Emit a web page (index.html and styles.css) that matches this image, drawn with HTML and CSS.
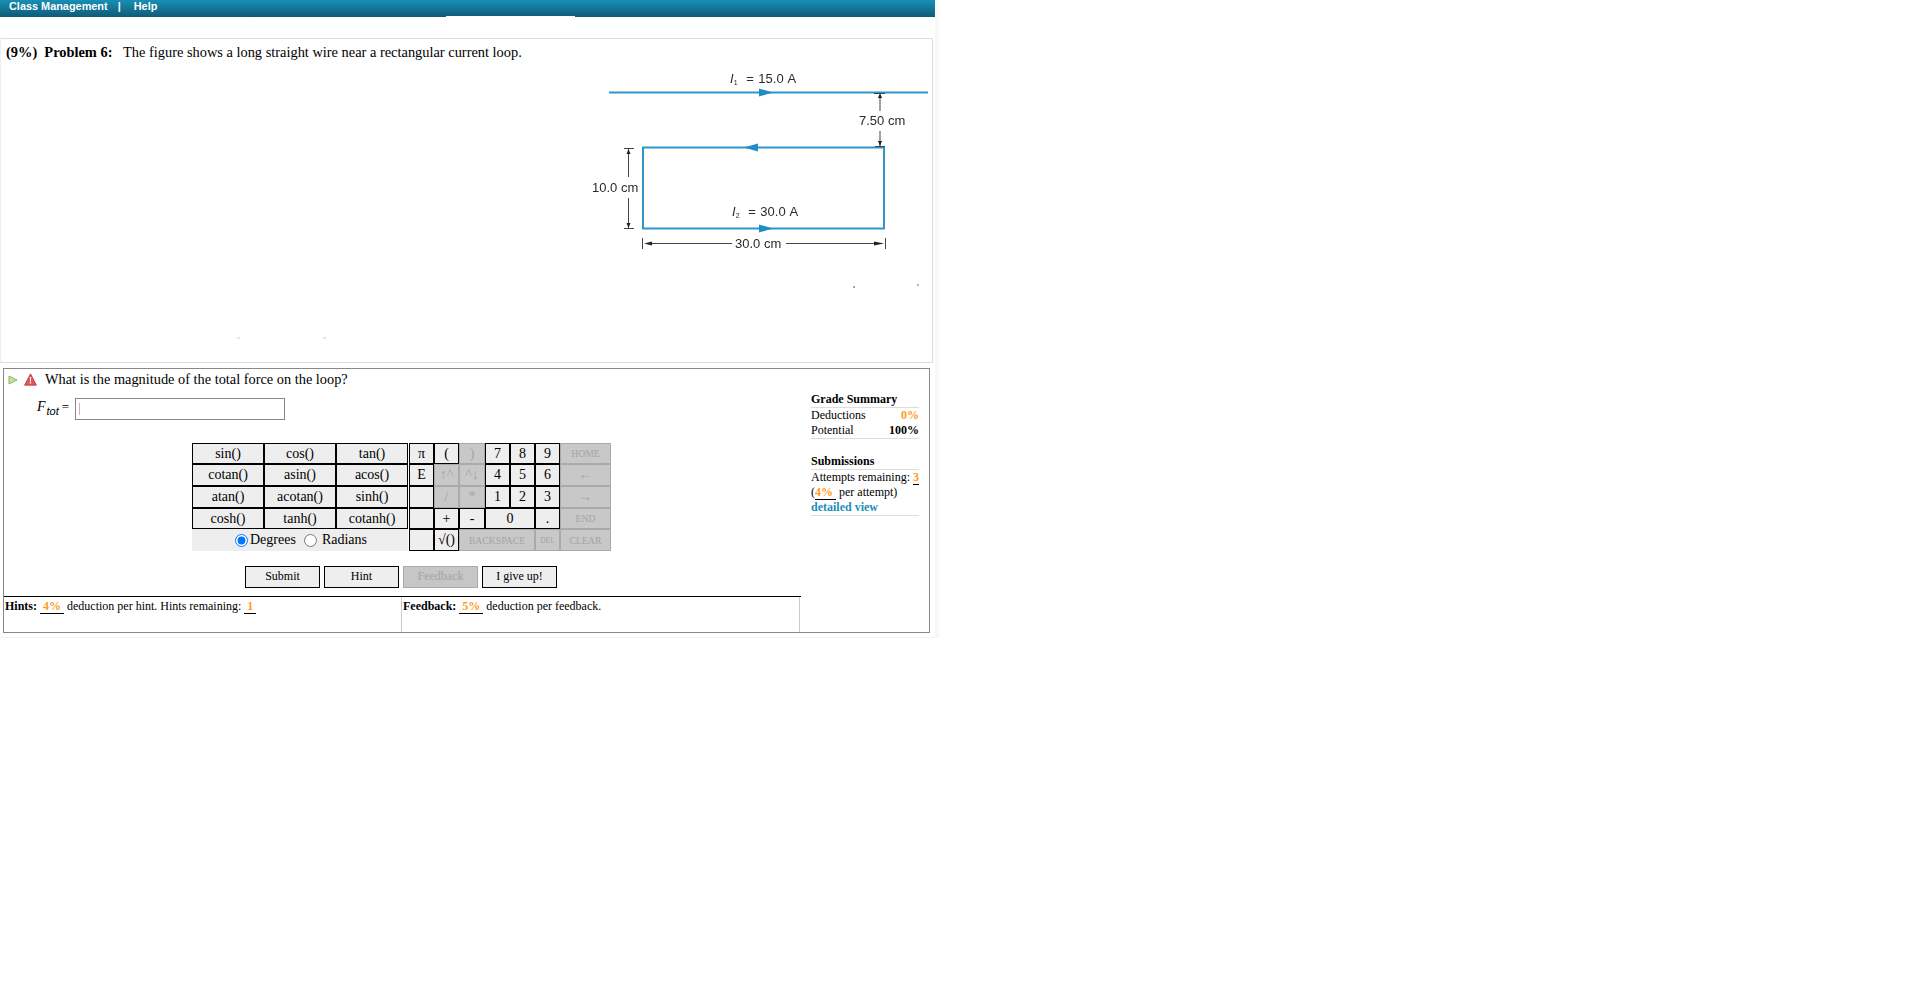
FILE: index.html
```html
<!DOCTYPE html>
<html lang="en">
<head>
<meta charset="utf-8">
<title>Problem 6</title>
<link rel="stylesheet" href="styles.css">
</head>
<body>
<div class="page">
  <header class="topbar">
    <nav class="topnav"><a>Class Management</a><span class="sep">|</span><a>Help</a></nav>
    <div class="notch"></div>
  </header>
  <section class="problem">
    <p class="statement"><b>(9%)&nbsp; Problem 6:</b>&nbsp;&nbsp; The figure shows a long straight wire near a rectangular current loop.</p>
    <svg class="figure" width="934" height="292" viewBox="0 33 934 292" aria-label="figure">
      <g class="wire">
        <path d="M609 54.5H928"/>
        <path d="M643 109.5H884V190.5H643Z"/>
      </g>
      <g class="head">
        <path d="M759 50.5L773 54.5L759 58.5Z"/>
        <path d="M758 105.5L744 109.5L758 113.5Z"/>
        <path d="M759 186.5L773 190.5L759 194.5Z"/>
      </g>
      <g class="dim">
        <path d="M874 55.5H885M880 57V73M880 93V108M875 108.5H885"/>
        <path d="M624 110.5H634M628.5 111V139M628.5 160V190M624 190.5H634"/>
        <path d="M642.5 200V211M885.5 200V211M646 205.5H732M786 205.5H882"/>
      </g>
      <g class="tips">
        <path d="M880 55L878 60H882Z"/>
        <path d="M880 108L878 103H882Z"/>
        <path d="M628.5 111L626.5 116H630.5Z"/>
        <path d="M628.5 190L626.5 185H630.5Z"/>
        <path d="M644 205.5L652 203.5V207.5Z"/>
        <path d="M884 205.5L874 203.5V207.5Z"/>
      </g>
      <g class="labels">
        <text class="current" x="730" y="45"><tspan class="it">I</tspan><tspan class="sub" dy="2">1</tspan><tspan dy="-2" dx="4"> = 15.0 A</tspan></text>
        <text x="859" y="87">7.50 cm</text>
        <text x="592" y="154">10.0 cm</text>
        <text class="current" x="732" y="178"><tspan class="it">I</tspan><tspan class="sub" dy="2">2</tspan><tspan dy="-2" dx="4"> = 30.0 A</tspan></text>
        <text x="735" y="210">30.0 cm</text>
      </g>
      <circle class="speck" cx="854" cy="249" r=".8"/>
      <circle class="speck" cx="918" cy="247" r=".7"/>
      <path class="faint" d="M237 300h3M323 300h3"/>
    </svg>
  </section>
  <section class="question">
    <div class="qmain">
      <div class="qline">
        <svg class="play" width="10" height="10" viewBox="0 0 10 10"><path d="M1 1L9 5L1 9Z"/></svg>
        <svg class="warn" width="13" height="13" viewBox="0 0 12 12"><path class="warnbg" d="M6 .8L11.4 11.2H.6Z"/><path class="warnmark" d="M5.4 3.8H6.6L6.4 7.8H5.6ZM5.4 8.6H6.6V9.8H5.4Z"/></svg>
        <span>What is the magnitude of the total force on the loop?</span>
      </div>
      <div class="answer">
        <span class="var">F<sub>tot</sub></span><span class="eq">=</span>
        <div class="field"><i class="caret"></i></div>
      </div>
      <div class="calc">
        <div class="fns">
          <div class="key">sin()</div><div class="key">cos()</div><div class="key">tan()</div>
          <div class="key">cotan()</div><div class="key">asin()</div><div class="key">acos()</div>
          <div class="key">atan()</div><div class="key">acotan()</div><div class="key">sinh()</div>
          <div class="key">cosh()</div><div class="key">tanh()</div><div class="key">cotanh()</div>
          <div class="units">
            <input class="radio" type="radio" name="unit" checked><span class="rlabel">Degrees</span>
            <input class="radio second" type="radio" name="unit"><span class="rlabel">Radians</span>
          </div>
        </div>
        <div class="pad">
          <div class="key">π</div><div class="key">(</div><div class="key off">)</div><div class="key">7</div><div class="key">8</div><div class="key">9</div><div class="key off sm">HOME</div>
          <div class="key">E</div><div class="key off">↑^</div><div class="key off">^↓</div><div class="key">4</div><div class="key">5</div><div class="key">6</div><div class="key off">←</div>
          <div class="key"></div><div class="key off">/</div><div class="key off">*</div><div class="key">1</div><div class="key">2</div><div class="key">3</div><div class="key off">→</div>
          <div class="key"></div><div class="key">+</div><div class="key">-</div><div class="key span2">0</div><div class="key">.</div><div class="key off sm">END</div>
          <div class="key"></div><div class="key">√()</div><div class="key off sm span3">BACKSPACE</div><div class="key off xs">DEL</div><div class="key off sm">CLEAR</div>
        </div>
      </div>
      <div class="actions">
        <button class="btn">Submit</button>
        <button class="btn">Hint</button>
        <button class="btn disabled">Feedback</button>
        <button class="btn">I give up!</button>
      </div>
      <div class="notes">
        <div class="note"><b>Hints:</b> <b class="pct">&nbsp;4%&nbsp;</b> deduction per hint. Hints remaining: <b class="pct">&nbsp;1&nbsp;</b></div>
        <div class="note"><b>Feedback:</b> <b class="pct">&nbsp;5%&nbsp;</b> deduction per feedback.</div>
      </div>
    </div>
    <aside class="summary">
      <h4 class="sumhead">Grade Summary</h4>
      <div class="sumbody">
        <div class="sumrow"><span>Deductions</span><b class="orange">0%</b></div>
        <div class="sumrow"><span>Potential</span><b>100%</b></div>
      </div>
      <h4 class="sumhead gap">Submissions</h4>
      <div class="sumbody">
        <div>Attempts remaining: <b class="pct">3</b></div>
        <div>(<b class="pct">4%&nbsp;</b> per attempt)</div>
        <div><b class="link">detailed view</b></div>
      </div>
    </aside>
  </section>
</div>
</body>
</html>
```
FILE: styles.css
```css
html, body { margin: 0; padding: 0; background: #fff; }
body { font-family: "Liberation Serif", "Times New Roman", serif; color: #000; }

.page {
  width: 935px;
  height: 637px;
  background: #fff;
  border-right: 4px solid #f8f8f8;
  border-bottom: 1px solid #f4f4f4;
  overflow: hidden;
}

.topbar {
  position: relative;
  height: 17px;
  background: linear-gradient(#1790b5, #0f5a77);
  overflow: hidden;
}
.topnav {
  display: flex;
  align-items: center;
  height: 13px;
  padding-left: 9px;
  font: bold 10.9px/13px "Liberation Sans", Arial, sans-serif;
  color: #fff;
}
.sep { margin: 0 13px 0 10px; }
.notch {
  position: absolute;
  left: 446px;
  bottom: 0;
  width: 129px;
  height: 1px;
  background: #fff;
}

.problem {
  height: 325px;
  margin-top: 21px;
  border: 1px solid #ddd;
  border-left: 1px solid #eee;
  width: 933px;
  box-sizing: border-box;
  overflow: hidden;
}
.statement {
  margin: 0;
  padding: 4px 0 0 5px;
  height: 32px;
  box-sizing: border-box;
  font-size: 14.4px;
  line-height: 18px;
}
.figure { display: block; margin-left: -1px; filter: blur(.3px); }
.wire path { fill: none; stroke: #2f96c9; stroke-width: 2; }
.head path { fill: #1f8dc6; }
.dim path { fill: none; stroke: #444; stroke-width: 1; }
.tips path { fill: #222; }
.labels text { font: 13px "Liberation Sans", Arial, sans-serif; fill: #2a2a2a; }
.labels .current { word-spacing: 1px; }
.labels .it { font-style: italic; }
.labels .sub { font-size: 7px; }
.speck { fill: #333; }
.faint { fill: none; stroke: #ccc; stroke-width: 1; }

.question {
  display: grid;
  grid-template-columns: 797px 1fr;
  box-sizing: border-box;
  width: 927px;
  height: 265px;
  margin: 5px 0 0 3px;
  border: 1px solid #888;
}
.qmain { display: flex; flex-direction: column; }
.qline {
  display: flex;
  align-items: center;
  height: 21px;
  font-size: 14.35px;
}
.play { margin-left: 4px; }
.play path { fill: #c7dfa0; stroke: #8db56b; stroke-width: 1; }
.warn { margin-left: 6px; margin-right: 8px; }
.warnbg { fill: #e2595c; stroke: #b03a3c; stroke-width: .8; }
.warnmark { fill: #fff; }

.answer {
  display: flex;
  align-items: flex-start;
  height: 22px;
  margin-top: 8px;
  padding-left: 33px;
}
.var { font-size: 14px; font-style: italic; line-height: 18px; }
.var sub { font: italic 11px "Liberation Sans", Arial, sans-serif; vertical-align: -4px; line-height: 0; margin-left: 1px; }
.eq { font-size: 13px; line-height: 18px; margin: 0 2px 0 3px; }
.field {
  width: 210px;
  height: 22px;
  margin-left: 4px;
  box-sizing: border-box;
  border: 1px solid #888;
  padding: 4px 3px;
}
.caret { display: block; width: 1px; height: 12px; background: #e8a4c6; }

.calc {
  display: flex;
  gap: 1px;
  margin: 23px 0 0 188px;
}
.fns, .pad { display: grid; grid-template-rows: 21px 22px 22px 21px 22px; }
.fns { grid-template-columns: 72px 72px 72px; }
.pad { grid-template-columns: 25px 25px 26px 25px 25px 25px 51px; }
.key {
  display: flex;
  align-items: center;
  justify-content: center;
  box-sizing: border-box;
  border: 1px solid #000;
  background: #eee;
  font-size: 14px;
  white-space: nowrap;
}
.key.off { border-color: #aaa; background: #c8c8c8; color: #a4a4a4; }
.key.sm { font-size: 9.7px; }
.key.xs { font-size: 7.5px; }
.span2 { grid-column: span 2; }
.span3 { grid-column: span 3; }
.units {
  grid-column: span 3;
  display: flex;
  align-items: center;
  background: #eee;
  font-size: 14px;
  padding-left: 43px;
}
.radio {
  width: 13px;
  height: 13px;
  margin: 0 2px 0 0;
}
.radio.second { margin: 0 5px 0 8px; }

.actions {
  display: flex;
  gap: 4px;
  margin: 15px 0 0 241px;
}
.btn {
  width: 75px;
  height: 22px;
  box-sizing: border-box;
  margin: 0;
  padding: 0 0 2px;
  border: 1px solid #000;
  background: #eee;
  font: 12px "Liberation Serif", serif;
  color: #000;
}
.btn.disabled { border-color: #aaa; background: #c6c6c6; color: #a4a4a4; }

.notes {
  display: grid;
  grid-template-columns: 398px 398px;
  margin-top: 8px;
  flex: 1;
  border-top: 1px solid #000;
}
.note {
  padding: 2px 1px;
  border-right: 1px solid #ccc;
  font-size: 12px;
  line-height: 14px;
}
.pct { color: #ff9a1e; border-bottom: 1px solid #000; }

.summary { padding: 23px 12px 0 10px; font-size: 12px; white-space: nowrap; }
.sumhead { margin: 0; font-size: 12px; line-height: 14px; height: 15px; border-bottom: 1px solid #ddd; }
.sumhead.gap { margin-top: 15px; }
.sumbody { border-bottom: 1px solid #ddd; line-height: 15px; }
.sumrow { display: flex; justify-content: space-between; }
.orange { color: #ff9a1e; }
.link { color: #1d8fb8; }
```
